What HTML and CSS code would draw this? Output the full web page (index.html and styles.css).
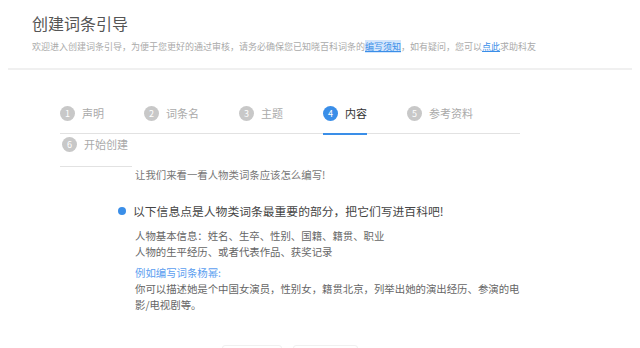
FILE: index.html
```html
<!DOCTYPE html>
<html lang="zh-CN">
<head>
  <meta charset="UTF-8">
  <title>创建词条引导</title>
  <meta name="viewport" content="width=device-width, initial-scale=1.0">
  <link rel="stylesheet" href="styles.css">
</head>
<body>

  <div class="header">
    <h1>创建词条引导</h1>
    <p class="intro">欢迎进入创建词条引导，为便于您更好的通过审核，请务必确保您已知晓百科词条的<a class="mark" href="#">编写须知</a>，如有疑问，您可以<a href="#">点此</a>求助科友</p>
  </div>

  <div class="steps">
    <div class="step"><span class="num">1</span>声明</div>
    <div class="step"><span class="num">2</span>词条名</div>
    <div class="step"><span class="num">3</span>主题</div>
    <div class="step active"><span class="num">4</span>内容</div>
    <div class="step"><span class="num">5</span>参考资料</div>
  </div>
  <div class="steps-more">
    <div class="step"><span class="num">6</span>开始创建</div>
  </div>

  <div class="guide">
    <p class="lead">让我们来看一看人物类词条应该怎么编写!</p>
    <p class="point"><span class="dot"></span>以下信息点是人物类词条最重要的部分，把它们写进百科吧!</p>
    <p class="info">人物基本信息：姓名、生卒、性别、国籍、籍贯、职业<br>人物的生平经历、或者代表作品、获奖记录</p>
    <p class="info example"><span class="eg">例如编写词条杨幂:</span><br>你可以描述她是个中国女演员，性别女，籍贯北京，列举出她的演出经历、参演的电<br>影/电视剧等。</p>
  </div>

  <div class="actions">
    <button class="btn small"></button>
    <button class="btn"></button>
  </div>

</body>
</html>
```

FILE: styles.css
```css
:root{
  --blue:#3a8ee8;--grey:#c8c8c8;--line:#e2e2e2;--txt:#666
}
*{box-sizing:border-box;margin:0;padding:0}
html,body{overflow:hidden}
body{
  font-family:"Noto Sans CJK SC","Noto Sans",sans-serif;background:#fff;color:var(--txt);
  width:640px;height:348px
}
a{color:var(--blue);text-decoration:underline}

/* header */
.header{margin:0 8px;padding:12px 24px 15px;border-bottom:2px solid #f0f0f0}
h1{font-size:16px;font-weight:400;line-height:22px;color:#555}
.intro{font-size:9px;line-height:13px;margin-top:6px;color:#aaa;white-space:nowrap}
.mark{background:#d4e6fc}

/* steps */
.steps{
  display:flex;margin:26px 0 0 60px;width:460px;height:38px;
  border-bottom:1px solid var(--line)
}
.step{
  display:flex;align-items:center;gap:7px;margin-right:40px;
  font-size:11px;color:#aaa;height:38px;padding-bottom:4px
}
.num{
  width:15px;height:15px;border-radius:50%;background:var(--grey);color:#fff;
  font-size:9px;line-height:15px;text-align:center
}
.step.active{color:#333;border-bottom:2px solid var(--blue);height:39px;padding-bottom:3px}
.step.active .num{background:var(--blue)}
.steps-more{
  margin-left:60px;width:72px;height:33px;border-bottom:1px solid var(--line)
}
.steps-more .step{height:20px;padding:0 0 0 2px;margin:0}

/* guide */
.guide{padding-left:135px}
.guide p{font-size:10.4px;line-height:16px}
.lead{color:#777}
.guide .point{
  display:flex;align-items:center;gap:7px;margin:19px 0 0 -17px;
  font-size:11.8px;line-height:18px;color:#444
}
.dot{width:8px;height:8px;border-radius:50%;background:var(--blue);flex:none}
.guide .info{margin-top:8px}
.guide .example{margin-top:5px}
.eg{color:#5b9ef0}

/* bottom buttons */
.actions{display:flex;gap:11px;margin:32px 0 0 222px}
.btn{width:65px;height:30px;border:1px solid #f0f0f0;border-radius:3px;background:#fff}
.btn.small{width:60px}
```
